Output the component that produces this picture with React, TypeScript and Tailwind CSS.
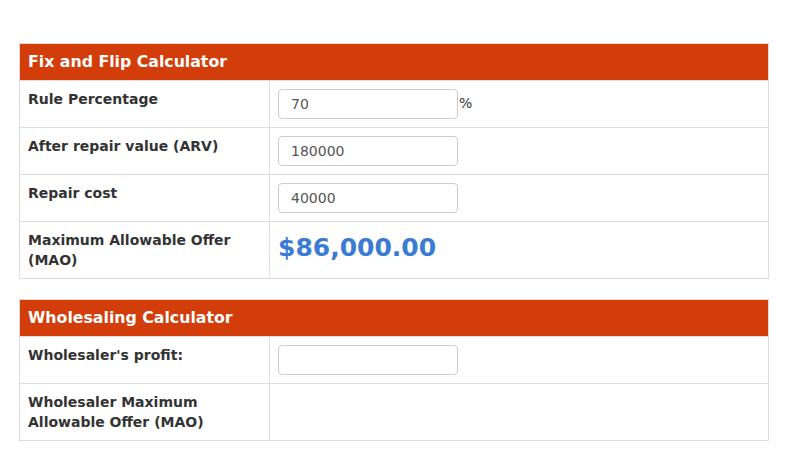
import { useState } from "react";

const font = "font-['DejaVu_Sans',sans-serif]";

function Header({ title }: { title: string }) {
  return (
    <tr>
      <th
        colSpan={2}
        className="bg-[#d33d0a] px-2 py-2 text-left text-[15.75px] leading-5 font-bold text-white"
      >
        {title}
      </th>
    </tr>
  );
}

function Row({ label, children }: { label: React.ReactNode; children?: React.ReactNode }) {
  return (
    <tr>
      <td className="w-[250px] border border-[#ddd] px-2 py-2 align-top text-[14px] leading-5 font-bold text-[#333]">
        {label}
      </td>
      <td className="border border-[#ddd] px-2 py-2 align-top text-[14px] leading-5 text-[#333]">
        {children}
      </td>
    </tr>
  );
}

function NumberInput({ value, onChange }: { value: string; onChange: (v: string) => void }) {
  return (
    <input
      type="text"
      value={value}
      onChange={(event) => onChange(event.target.value)}
      className="h-[30px] w-[180px] rounded-[4px] border border-[#ccc] bg-white px-3 text-[14px] text-[#555] outline-none"
    />
  );
}

export default function App() {
  const [rule, setRule] = useState("70");
  const [arv, setArv] = useState("180000");
  const [repair, setRepair] = useState("40000");
  const [profit, setProfit] = useState("");

  const mao = (Number(arv) * Number(rule)) / 100 - Number(repair);
  const formatted =
    "$" + mao.toLocaleString("en-US", { minimumFractionDigits: 2, maximumFractionDigits: 2 });

  const wholesale = profit ? mao - Number(profit) : null;

  return (
    <div className={`${font} min-h-[451px] bg-white pt-[43px] pl-[19px]`}>
      <table className="w-[750px] border-collapse border border-[#ddd]">
        <tbody>
          <Header title="Fix and Flip Calculator" />
          <Row label="Rule Percentage">
            <div className="flex items-start">
              <NumberInput value={rule} onChange={setRule} />
              <span className="ml-[1px] mt-[4px]">%</span>
            </div>
          </Row>
          <Row label="After repair value (ARV)">
            <NumberInput value={arv} onChange={setArv} />
          </Row>
          <Row label="Repair cost">
            <NumberInput value={repair} onChange={setRepair} />
          </Row>
          <Row label="Maximum Allowable Offer (MAO)">
            <div className="pt-[2px] text-[25px] leading-8 font-bold text-[#3a7bd5]">{formatted}</div>
          </Row>
        </tbody>
      </table>

      <table className="mt-[20px] w-[750px] border-collapse border border-[#ddd]">
        <tbody>
          <Header title="Wholesaling Calculator" />
          <Row label="Wholesaler's profit:">
            <NumberInput value={profit} onChange={setProfit} />
          </Row>
          <Row label="Wholesaler Maximum Allowable Offer (MAO)">
            {wholesale !== null && (
              <div className="text-[25px] font-bold text-[#3a7bd5]">
                {"$" + wholesale.toLocaleString("en-US", { minimumFractionDigits: 2 })}
              </div>
            )}
          </Row>
        </tbody>
      </table>
    </div>
  );
}
